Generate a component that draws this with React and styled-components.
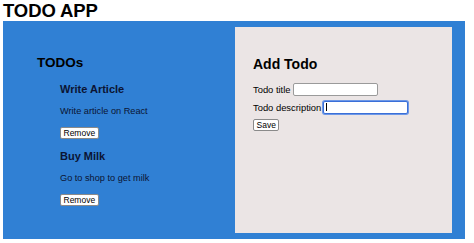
import React from "react";
import styled, { createGlobalStyle } from "styled-components";

const GlobalStyle = createGlobalStyle`
  html, body {
    margin: 0;
    padding: 0;
    background: #ffffff;
  }
  body {
    font-family: "Liberation Sans", Arial, sans-serif;
    color: #000;
  }
`;

const Page = styled.div`
  padding: 0 3px;
  width: 462px;
`;

const AppTitle = styled.h1`
  margin: 0;
  font-size: 18.5px;
  line-height: 21px;
  font-weight: bold;
  letter-spacing: -0.1px;
`;

const Board = styled.div`
  display: flex;
  background-color: #3080d4;
  padding: 6px 13px 6px 0;
  height: 206px;
`;

const TodoColumn = styled.div`
  flex: 1;
  padding: 28px 0 0 34px;
`;

const SectionTitle = styled.h2`
  margin: 0;
  font-size: ${(p) => p.size || 13.5}px;
  line-height: 16px;
  font-weight: bold;
  color: #000;
`;

const TodoList = styled.div`
  display: flex;
  flex-direction: column;
  gap: 11px;
  margin: 12px 0 0 23px;
`;

const TodoItem = styled.div`
  display: flex;
  flex-direction: column;
  align-items: flex-start;
  gap: 10px;
`;

const TodoTitle = styled.h3`
  margin: 0;
  font-size: 11px;
  line-height: 13px;
  font-weight: bold;
  color: #0b1433;
`;

const TodoText = styled.p`
  margin: 0;
  font-size: 9.2px;
  line-height: 11px;
  color: #0b1433;
`;

const SmallButton = styled.button`
  font-family: "Liberation Sans", Arial, sans-serif;
  font-size: 8.5px;
  height: 12px;
  line-height: 10px;
  padding: 0 2.5px;
  background: #ffffff;
  color: #000;
  border: 1px solid #8a8a8a;
  border-radius: 2px;
  cursor: pointer;
`;

const FormPanel = styled.div`
  width: 217px;
  background-color: #ebe5e5;
  padding: 29px 0 0 18px;
  box-sizing: border-box;
`;

const Form = styled.form`
  display: flex;
  flex-direction: column;
  align-items: flex-start;
  gap: 5px;
  margin-top: 11px;
`;

const Row = styled.div`
  display: flex;
  align-items: center;
  gap: 2px;
  font-size: 9.4px;
  color: #000;
`;

const Field = styled.span`
  position: relative;
  display: inline-block;
  &::after {
    content: "";
    display: ${(p) => (p.focused ? "block" : "none")};
    position: absolute;
    left: 3px;
    top: 2px;
    width: 1px;
    height: 8px;
    background: #000;
  }
`;

const TextInput = styled.input`
  display: block;
  width: 85px;
  height: 13px;
  box-sizing: border-box;
  font-size: 8px;
  padding: 0 2px;
  background: #ffffff;
  border: 1px solid ${(p) => (p.focused ? "#3a6fd8" : "#9a9a9a")};
  border-radius: 2px;
  box-shadow: ${(p) => (p.focused ? "0 0 0 1px #6d97e6" : "none")};
  outline: none;
`;

const todos = [
  { title: "Write Article", text: "Write article on React" },
  { title: "Buy Milk", text: "Go to shop to get milk" },
];

const App = () => {
  return (
    <Page>
      <GlobalStyle />
      <AppTitle>TODO APP</AppTitle>
      <Board>
        <TodoColumn>
          <SectionTitle>TODOs</SectionTitle>
          <TodoList>
            {todos.map((t) => (
              <TodoItem key={t.title}>
                <TodoTitle>{t.title}</TodoTitle>
                <TodoText>{t.text}</TodoText>
                <SmallButton>Remove</SmallButton>
              </TodoItem>
            ))}
          </TodoList>
        </TodoColumn>
        <FormPanel>
          <SectionTitle size={14}>Add Todo</SectionTitle>
          <Form onSubmit={(e) => e.preventDefault()}>
            <Row>
              <label htmlFor="title">Todo title</label>
              <Field>
                <TextInput id="title" />
              </Field>
            </Row>
            <Row>
              <label htmlFor="description">Todo description</label>
              <Field focused>
                <TextInput id="description" focused />
              </Field>
            </Row>
            <SmallButton>Save</SmallButton>
          </Form>
        </FormPanel>
      </Board>
    </Page>
  );
};

export default App;
